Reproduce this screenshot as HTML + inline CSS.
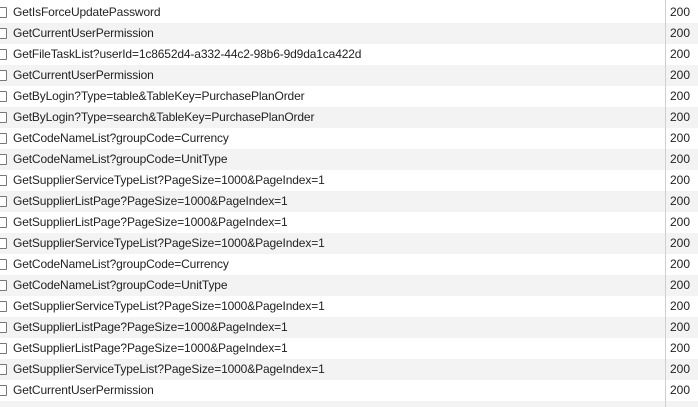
<!DOCTYPE html><html><head><style>
html,body{margin:0;width:698px;height:407px;overflow:hidden;background:#fff}
body{font-family:"Liberation Sans",sans-serif;font-size:12px;color:#222;position:relative;letter-spacing:-0.14px}
.r{position:absolute;left:0;width:698px;height:21px;line-height:21px}
.cb{position:absolute;left:-4px;top:5px;width:9px;height:9px;border:1px solid #777;border-radius:1px;background:#fff}
.n{position:absolute;left:13px;white-space:nowrap}
.s{position:absolute;left:670px;letter-spacing:0}
.d{position:absolute;left:665px;top:0;width:1px;height:407px;background:#cfcfcf}
</style></head><body>
<div id="w"></div>
<script>
var t=["GetIsForceUpdatePassword","GetCurrentUserPermission","GetFileTaskList?userId=1c8652d4-a332-44c2-98b6-9d9da1ca422d","GetCurrentUserPermission","GetByLogin?Type=table&TableKey=PurchasePlanOrder","GetByLogin?Type=search&TableKey=PurchasePlanOrder","GetCodeNameList?groupCode=Currency","GetCodeNameList?groupCode=UnitType","GetSupplierServiceTypeList?PageSize=1000&PageIndex=1","GetSupplierListPage?PageSize=1000&PageIndex=1","GetSupplierListPage?PageSize=1000&PageIndex=1","GetSupplierServiceTypeList?PageSize=1000&PageIndex=1","GetCodeNameList?groupCode=Currency","GetCodeNameList?groupCode=UnitType","GetSupplierServiceTypeList?PageSize=1000&PageIndex=1","GetSupplierListPage?PageSize=1000&PageIndex=1","GetSupplierListPage?PageSize=1000&PageIndex=1","GetSupplierServiceTypeList?PageSize=1000&PageIndex=1","GetCurrentUserPermission",""];
var h="";t.forEach(function(s,i){var e=s.replace(/&/g,"&amp;");h+='<div class="r" style="top:'+(2+21*i)+'px;'+(i%2?'background:#f3f3f3':'')+'">'+(s?'<div class="cb"></div><span class="n">'+e+'</span><span class="s">200</span>':'')+'</div>';});
document.getElementById("w").innerHTML=h+'<div class="d"></div>';
</script>
</body></html>
